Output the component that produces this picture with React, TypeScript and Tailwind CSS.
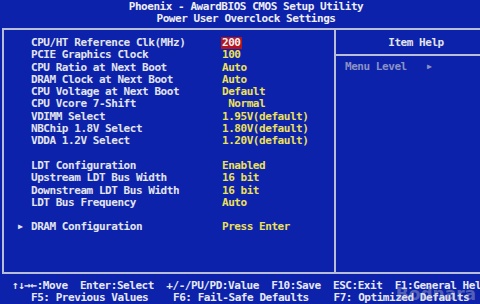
import React from 'react'

interface IRow {
  label: string
  value: string
  marker?: boolean
  selected?: boolean
}

const rows: (IRow | null)[] = [
  { label: 'CPU/HT Reference Clk(MHz)', value: '200', selected: true },
  { label: 'PCIE Graphics Clock', value: '100' },
  { label: 'CPU Ratio at Next Boot', value: 'Auto' },
  { label: 'DRAM Clock at Next Boot', value: 'Auto' },
  { label: 'CPU Voltage at Next Boot', value: 'Default' },
  { label: 'CPU Vcore 7-Shift', value: ' Normal' },
  { label: 'VDIMM Select', value: '1.95V(default)' },
  { label: 'NBChip 1.8V Select', value: '1.80V(default)' },
  { label: 'VDDA 1.2V Select', value: '1.20V(default)' },
  null,
  { label: 'LDT Configuration', value: 'Enabled' },
  { label: 'Upstream LDT Bus Width', value: '16 bit' },
  { label: 'Downstream LDT Bus Width', value: '16 bit' },
  { label: 'LDT Bus Frequency', value: 'Auto' },
  null,
  { label: 'DRAM Configuration', value: 'Press Enter', marker: true },
]

const Row: React.FC<{ row: IRow | null }> = ({ row }) => {
  if (!row) return <div className="h-[12.3px]" />
  return (
    <div className="flex h-[12.3px] items-center">
      <span className="w-[13px] text-[8px]">{row.marker ? '▶' : ''}</span>
      <span className="w-[191px] whitespace-pre">{row.label}</span>
      <span
        className={
          row.selected
            ? 'whitespace-pre bg-[#b3141e] px-px text-[#f4eef0] -ml-px'
            : 'whitespace-pre text-[#ece058]'
        }
      >
        {row.value}
      </span>
    </div>
  )
}

export default function App() {
  return (
    <div className="relative h-[304px] w-[480px] overflow-hidden bg-[#0c22ab] font-['DejaVu_Sans_Mono','Liberation_Mono',monospace] text-[11px] font-bold leading-[12.3px] tracking-[-0.45px] text-[#e2e4ee]">
      <div className="flex h-[28px] flex-col items-center pl-[12px] pt-[1px] text-[#eeeef4]">
        <div className="whitespace-pre">Phoenix - AwardBIOS CMOS Setup Utility</div>
        <div className="whitespace-pre">Power User Overclock Settings</div>
      </div>

      <div className="ml-[2px] flex h-[246px] border-y-2 border-l-2 border-[#b8bed6]">
        <div className="w-[332px] border-r-2 border-[#b8bed6] pl-[14px] pt-[7px]">
          {rows.map((row, i) => (
            <Row key={i} row={row} />
          ))}
        </div>
        <div className="flex-1">
          <div className="border-b-2 border-[#b8bed6] pb-[5px] pl-[16px] pt-[7px] text-center">
            Item Help
          </div>
          <div className="flex pl-[9px] pt-[5px] text-[#8a92c4]">
            <span className="w-[82px] whitespace-pre">Menu Level</span>
            <span className="text-[8px]">▶</span>
          </div>
        </div>
      </div>

      <div className="pt-[6px] text-[#e6e8f2]">
        <div className="whitespace-pre pl-[12px]">
          ↑↓→←:Move  Enter:Select  +/-/PU/PD:Value  F10:Save  ESC:Exit  F1:General Help
        </div>
        <div className="whitespace-pre pl-[31px]">
          F5: Previous Values    F6: Fail-Safe Defaults    F7: Optimized Defaults
        </div>
      </div>

      <span className="absolute bottom-[0px] right-[4px] font-['DejaVu_Sans',sans-serif] text-[17px] font-bold leading-[20px] tracking-normal text-[#c8c8d0]/40">
        Bodnara
      </span>
    </div>
  )
}
